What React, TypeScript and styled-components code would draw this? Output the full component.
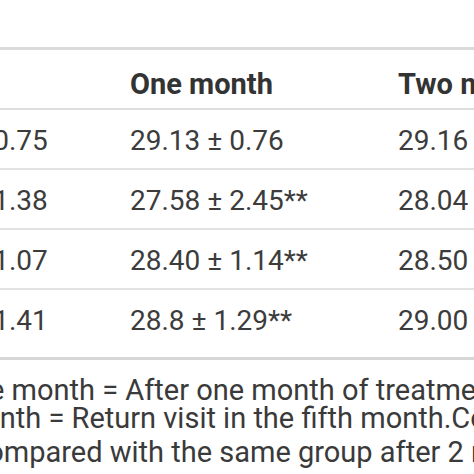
import React from "react";
import styled, { createGlobalStyle } from "styled-components";

const Global = createGlobalStyle`
  html, body { margin: 0; padding: 0; background: #ffffff; }
  body { font-family: Roboto, "Liberation Sans", Arial, sans-serif; color: #383838; }
`;

const Viewport = styled.div`
  width: 474px;
  height: 474px;
  overflow: hidden;
  padding-top: 47px;
  box-sizing: border-box;
`;

const Table = styled.table`
  margin-left: -106px;
  border-collapse: collapse;
  table-layout: fixed;
  width: 1040px;
  border-top: 3px solid #dadada;
  border-bottom: 3px solid #d6d6d6;
`;

const HeadCell = styled.th`
  text-align: left;
  font-weight: 700;
  font-size: 29px;
  line-height: 30px;
  padding: 19px 0 9px;
  color: #333333;
  white-space: nowrap;
  border-bottom: 2px solid #dedede;
`;

const Row = styled.tr<{ $last?: boolean }>`
  border-bottom: ${(p) => (p.$last ? "none" : "2px solid #e2e2e2")};
`;

const Cell = styled.td<{ $last?: boolean }>`
  font-size: 28px;
  line-height: 30px;
  padding: ${(p) => (p.$last ? "16px 0 21px" : "16px 0 12px")};
  white-space: nowrap;
  color: #3c3c3c;
`;

const Notes = styled.div`
  margin-top: 16px;
  font-size: 29px;
  color: #3a3a3a;
`;

const NoteLine = styled.div<{ $shift: number; $gap?: number }>`
  line-height: 28px;
  white-space: nowrap;
  margin-left: ${(p) => p.$shift}px;
  margin-top: ${(p) => p.$gap ?? 0}px;
`;

const rows = [
  ["29.06 ± 0.75", "29.13 ± 0.76", "29.16 ± 0.77"],
  ["28.92 ± 1.38", "27.58 ± 2.45**", "28.04 ± 2.07"],
  ["28.85 ± 1.07", "28.40 ± 1.14**", "28.50 ± 1.12"],
  ["28.96 ± 1.41", "28.8 ± 1.29**", "29.00 ± 1.30"],
];

export default function App() {
  return (
    <>
      <Global />
      <Viewport>
        <Table>
          <colgroup>
            <col style={{ width: 236 }} />
            <col style={{ width: 268 }} />
            <col style={{ width: 268 }} />
            <col style={{ width: 268 }} />
          </colgroup>
          <thead>
            <tr>
              <HeadCell>Before</HeadCell>
              <HeadCell>One month</HeadCell>
              <HeadCell>Two months</HeadCell>
              <HeadCell>Five months</HeadCell>
            </tr>
          </thead>
          <tbody>
            {rows.map((r, i) => {
              const last = i === rows.length - 1;
              return (
                <Row key={i} $last={last}>
                  {r.map((c, j) => (
                    <Cell key={j} $last={last}>
                      {c}
                    </Cell>
                  ))}
                  <Cell $last={last}>28.90 ± 1.20</Cell>
                </Row>
              );
            })}
          </tbody>
        </Table>
        <Notes>
          <NoteLine $shift={-47}>One month = After one month of treatment; Two months</NoteLine>
          <NoteLine $shift={-108}>Fifth month = Return visit in the fifth month.Compared</NoteLine>
          <NoteLine $shift={-28} $gap={6}>compared with the same group after 2 months</NoteLine>
        </Notes>
      </Viewport>
    </>
  );
}
